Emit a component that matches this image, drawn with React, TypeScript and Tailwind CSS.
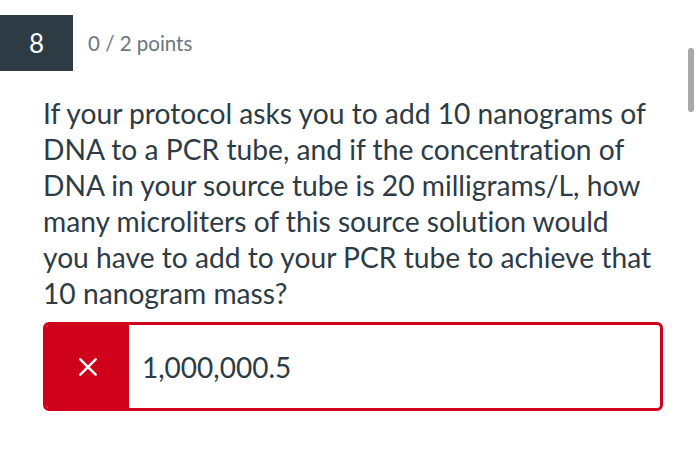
import React from "react";

export default function App() {
  return (
    <div className="relative w-[700px] h-[455px] bg-white overflow-hidden [font-variant-ligatures:none]" style={{ fontFamily: "Lato, 'Noto Sans', sans-serif" }}>
      <div className="flex items-center pt-[15px]">
        <div className="w-[73px] h-[56px] bg-[#2d3b45] text-white flex items-center justify-center text-[26px]">8</div>
        <div className="ml-[15px] text-[20.5px] text-[#6b7780]">0 / 2 points</div>
      </div>
      <div className="absolute left-[688px] top-[48px] w-[6px] h-[64px] rounded-full bg-[#a8a8a8]" />
      <div className="pl-[43px] pr-[20px] pt-[24px] text-[28.2px] leading-[36px] text-[#2d3b45] whitespace-nowrap">
        If your protocol asks you to add 10 nanograms of
        <br />
        DNA to a PCR tube, and if the concentration of
        <br />
        DNA in your source tube is 20 milligrams/L, how
        <br />
        many microliters of this source solution would
        <br />
        you have to add to your PCR tube to achieve that
        <br />
        10 nanogram mass?
      </div>
      <div className="ml-[43px] mt-[11px] w-[620px] h-[89px] rounded-[6px] border-[3px] border-[#d0021b] flex overflow-hidden">
        <div className="w-[83px] bg-[#d0021b] flex items-center justify-center">
          <svg width="22" height="22" viewBox="0 0 20 20">
            <path d="M3 3 L17 17 M17 3 L3 17" stroke="white" strokeWidth="2.2" strokeLinecap="round" />
          </svg>
        </div>
        <div className="flex items-center pl-[13px] text-[28px] text-[#2d3b45]">1,000,000.5</div>
      </div>
    </div>
  );
}
